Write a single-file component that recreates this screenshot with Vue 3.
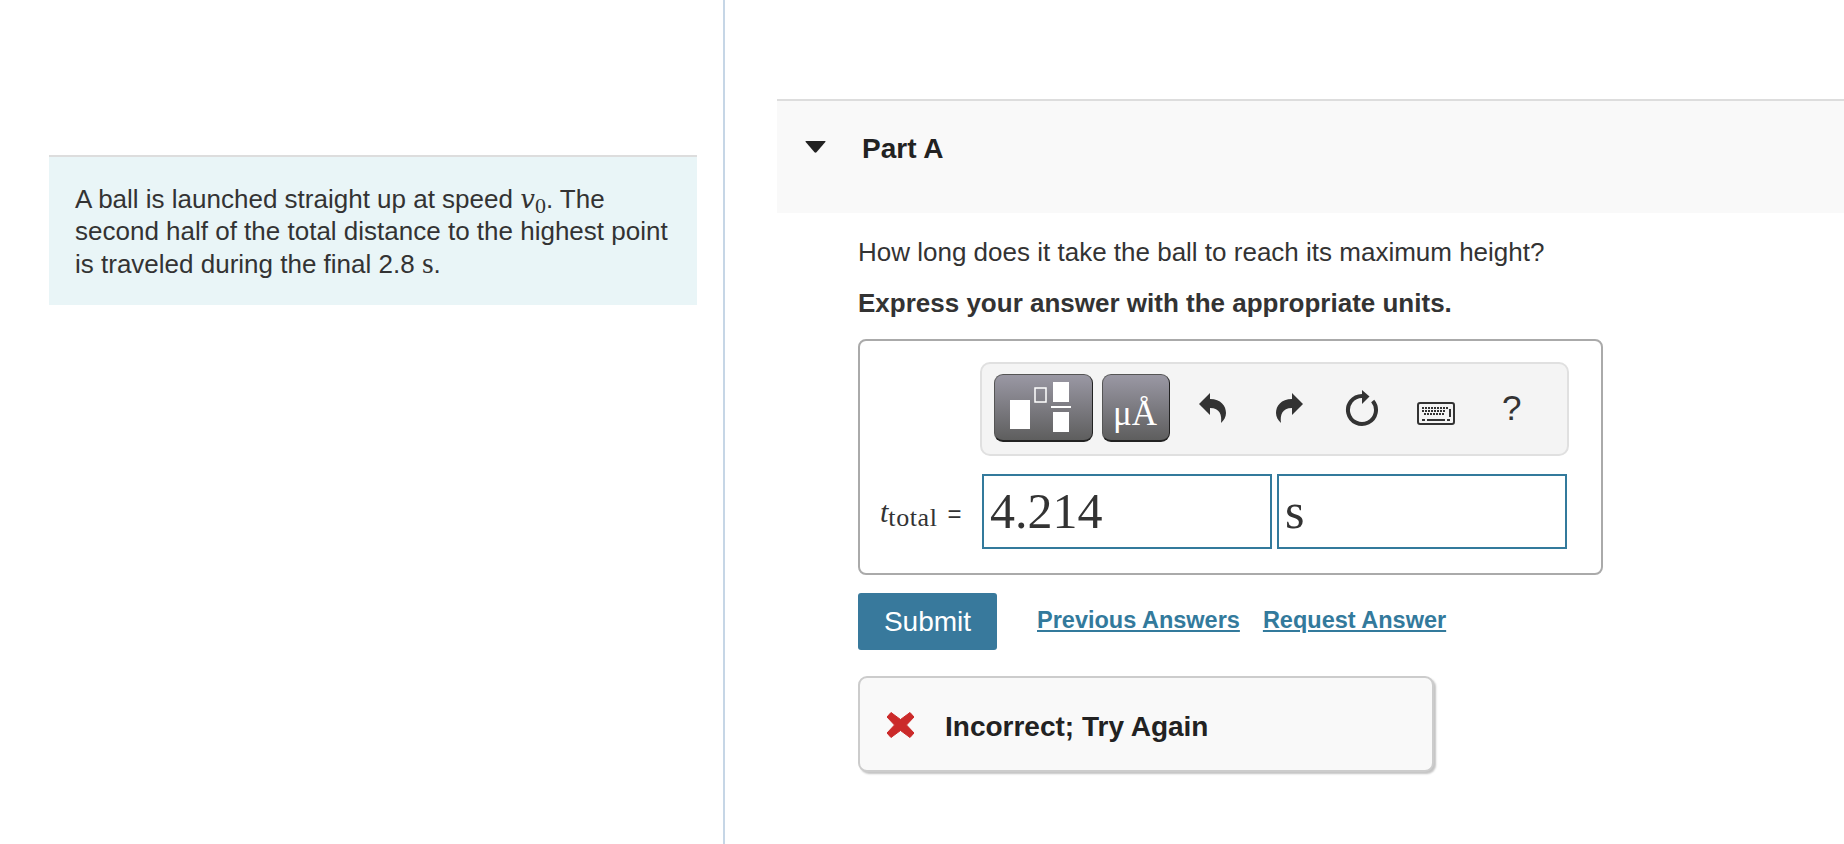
<script setup>
const keyRows = [
  { y: 7, xs: [7, 10, 13, 16, 19, 22, 25, 28, 31] },
  { y: 10, xs: [7, 10, 13, 16, 19, 22, 25, 28] },
  { y: 13, xs: [9, 12, 15, 18, 21, 24, 27] },
]
</script>

<template>
  <div class="page">
    <aside class="left">
      <div class="intro">
        <p>A ball is launched straight up at speed <span class="mv">v</span><sub class="ms">0</sub>. The second half of the total distance to the highest point is traveled during the final 2.8 <span class="unit">s</span>.</p>
      </div>
    </aside>

    <main class="right">
      <header class="part-head">
        <svg class="caret" width="21" height="12" viewBox="0 0 21 12"><path d="M1 0H20Q21 0 20.300 1L11.500 11.300Q10.500 12 9.500 11.300L.7 1Q0 0 1 0Z" fill="#222" /></svg>
        <h2>Part A</h2>
      </header>

      <section class="body">
        <p class="q">How long does it take the ball to reach its maximum height?</p>
        <p class="express">Express your answer with the appropriate units.</p>

        <div class="answer">
          <div class="toolbar">
            <button class="tbtn templ">
              <svg width="97" height="66" viewBox="0 0 97 66">
                <rect x="15" y="25" width="20" height="29" fill="#fff" />
                <rect x="40" y="13" width="11" height="14" fill="none" stroke="#fff" stroke-width="1.5" />
                <rect x="58" y="7" width="16" height="20" fill="#fff" />
                <rect x="56" y="31" width="20" height="2" fill="#fff" />
                <rect x="58" y="37" width="16" height="20" fill="#fff" />
              </svg>
            </button>
            <button class="tbtn units">μÅ</button>

            <svg class="ic undo" width="27" height="30" viewBox="0 0 27 30"><path d="M0 11 11 0V6C22 6 27 13 27 20 27 24 25 27 22 30 23 22 21 15 11 15V22Z" fill="#333" /></svg>
            <svg class="ic redo" width="27" height="30" viewBox="0 0 27 30"><path d="M27 11 16 0V6C5 6 0 13 0 20 0 24 2 27 5 30 4 22 6 15 16 15V22Z" fill="#333" /></svg>
            <svg class="ic reset" width="34" height="38" viewBox="0 0 34 38">
              <path d="M17 7A14 14 0 1 0 27.7 12" fill="none" stroke="#333" stroke-width="4" />
              <path d="M17 1 24.5 7.5 17 15Z" fill="#333" />
            </svg>
            <svg class="ic kbd" width="38" height="23" viewBox="0 0 38 23">
              <rect x="1" y="1" width="36" height="21" rx="2" fill="none" stroke="#333" stroke-width="2" />
              <template v-for="row in keyRows" :key="row.y">
                <rect v-for="x in row.xs" :key="x" :x="x - 2" :y="row.y - 2" width="2" height="2" fill="#333" />
              </template>
              <rect x="32" y="7" width="2" height="8" fill="#333" />
              <rect x="5" y="17" width="3" height="2" fill="#333" />
              <rect x="10" y="17" width="18" height="2" fill="#333" />
              <rect x="30" y="17" width="3" height="2" fill="#333" />
            </svg>
            <span class="help">?</span>
          </div>

          <div class="row">
            <div class="label"><span class="t">t</span><span class="tsub">total</span><span class="eq">=</span></div>
            <div class="inputs">
              <div class="inp">4.214</div>
              <div class="inp">s</div>
            </div>
          </div>
        </div>

        <div class="actions">
          <button class="submit">Submit</button>
          <a class="link first" href="#">Previous Answers</a>
          <a class="link" href="#">Request Answer</a>
        </div>

        <div class="feedback">
          <svg class="xmark" width="27" height="26" viewBox="0 0 27 26"><path d="M4 0.5 13.500 7.500 23 0.500 27 5 19.500 13 27 21 23 25.500 13.500 18.500 4 25.500 0 21 7.500 13 0 5Z" fill="#cb2a2a" stroke="#cb2a2a" stroke-linejoin="round" /></svg>
          <strong>Incorrect; Try Again</strong>
        </div>
      </section>
    </main>
  </div>
</template>

<style>
html, body { margin: 0; background: #fff; overflow: hidden; }
</style>

<style scoped>
.page {
  display: flex;
  height: 844px;
  font-family: "Liberation Sans", Arial, sans-serif;
  color: #333;
}
p, h2 { margin: 0; }

.left {
  box-sizing: border-box;
  width: 725px;
  height: 844px;
  padding: 155px 26px 0 49px;
  border-right: 2px solid #c6d6e6;
  flex: none;
}
.intro {
  box-sizing: border-box;
  height: 150px;
  border-top: 2px solid #ddd;
  background: #e9f5f7;
  padding: 26px 26px 0;
  font-size: 26px;
  line-height: 32px;
}
.mv { font-family: "DejaVu Serif", serif; font-style: italic; font-size: 26px; }
.ms { font-family: "Liberation Serif", serif; font-size: 22px; line-height: 0; vertical-align: -5px; }
.unit { font-family: "Liberation Serif", serif; font-size: 30px; }

.right {
  flex: 1;
  min-width: 0;
  padding: 99px 0 0 52px;
}
.part-head {
  display: flex;
  align-items: flex-start;
  height: 114px;
  box-sizing: border-box;
  border-top: 2px solid #ddd;
  background: #f9f9f9;
  padding: 40px 0 0 28px;
}
.caret { flex: none; }
.part-head h2 {
  font-size: 28px;
  font-weight: 700;
  line-height: 32px;
  margin: -8px 0 0 36px;
  color: #222;
}

.body { padding-left: 81px; width: 745px; }
.q { font-size: 26px; line-height: 32px; margin-top: 23px; }
.express { font-size: 26px; line-height: 32px; font-weight: 700; margin-top: 19px; }

.answer {
  margin-top: 20px;
  box-sizing: border-box;
  width: 745px;
  height: 236px;
  border: 2px solid #aaa;
  border-radius: 8px;
  padding: 21px 34px 0 0;
  display: flex;
  flex-direction: column;
  align-items: flex-end;
}
.toolbar {
  box-sizing: border-box;
  width: 589px;
  height: 94px;
  background: #f4f4f4;
  border: 2px solid #e0e0e0;
  border-radius: 10px;
  display: flex;
  align-items: center;
  padding: 0 0 3px 12px;
  flex: none;
  margin-right: -2px;
}
.tbtn {
  box-sizing: border-box;
  height: 68px;
  padding: 0;
  border: 1px solid #555;
  border-right-color: #222;
  border-bottom: 2px solid #222;
  border-radius: 9px;
  background: linear-gradient(#9a98a4, #5e5e5e);
  color: #fff;
  flex: none;
}
.templ { width: 99px; display: flex; }
.units {
  width: 68px;
  margin-left: 9px;
  font-family: "Liberation Serif", serif;
  font-size: 35px;
  line-height: 1;
  padding: 12px 2px 0 0;
}
.ic { flex: none; }
.undo { margin-left: 29px; }
.redo { margin-left: 50px; }
.reset { margin-left: 42px; }
.kbd { margin-left: 38px; margin-top: 11px; }
.help {
  margin-left: 47px;
  font-size: 35px;
  line-height: 36px;
  color: #333;
}

.row {
  margin-top: 18px;
  width: 100%;
  display: flex;
  align-items: center;
  justify-content: space-between;
}
.label {
  margin-left: 20px;
  font-family: "Liberation Serif", serif;
  display: flex;
  align-items: baseline;
  color: #333;
}
.t { font-style: italic; font-size: 30px; }
.tsub { font-size: 26px; letter-spacing: 0.6px; position: relative; top: 4px; }
.eq { font-family: "Liberation Sans", sans-serif; font-size: 24px; margin-left: 10px; }
.inputs { display: flex; gap: 5px; }
.inp {
  box-sizing: border-box;
  width: 290px;
  height: 75px;
  border: 2px solid #337a9c;
  font-family: "Liberation Serif", serif;
  font-size: 50px;
  line-height: 70px;
  padding-left: 6px;
  color: #333;
}

.actions { display: flex; align-items: center; margin-top: 18px; }
.submit {
  width: 139px;
  height: 57px;
  border: 0;
  border-radius: 3px;
  background: #38799c;
  color: #fff;
  font-family: inherit;
  font-size: 28px;
  padding: 0;
}
.link {
  color: #337a9c;
  font-size: 23.5px;
  font-weight: 700;
  text-decoration: underline;
  margin-left: 23px;
  margin-top: -3px;
}
.link.first { margin-left: 40px; }

.feedback {
  margin-top: 26px;
  box-sizing: border-box;
  width: 576px;
  height: 96px;
  border: 2px solid #ccc;
  border-radius: 9px;
  background: #f9f9f9;
  box-shadow: 2px 2px 2px #c4c4c4;
  display: flex;
  align-items: center;
  padding-left: 27px;
}
.xmark { margin-top: 2px; }
.feedback strong {
  font-size: 28px;
  color: #222;
  margin-left: 31px;
  margin-top: 6px;
}
</style>
